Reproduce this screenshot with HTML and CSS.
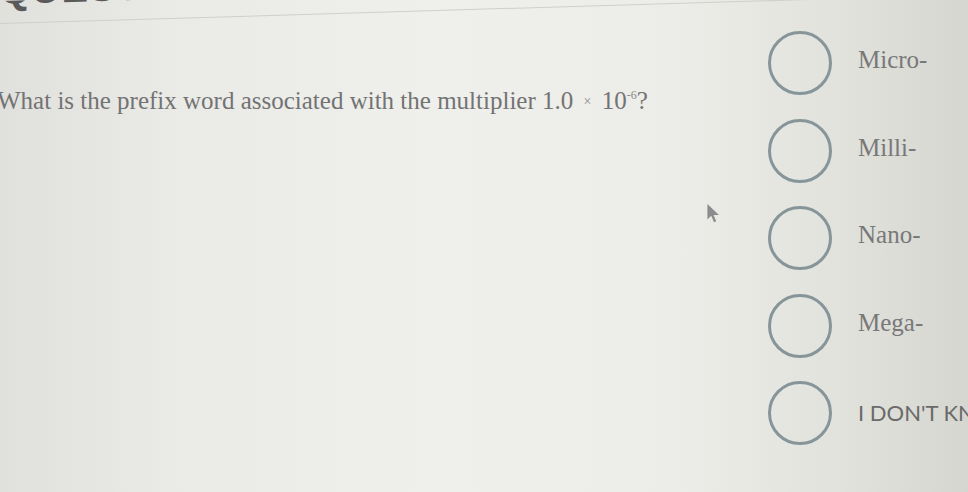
FILE: index.html
```html
<!DOCTYPE html>
<html lang="en">
<head>
<meta charset="utf-8">
<title>Question</title>
<link rel="stylesheet" href="styles.css">
</head>
<body>
<div class="page">
  <header class="qhead">
    <h1 class="qtitle">QUESTION 7</h1>
  </header>
  <main class="content">
    <p class="question">What is the prefix word associated with the multiplier 1.0 <span class="times">×</span> 10<sup>-6</sup>?</p>
    <ul class="options">
      <li class="option"><span class="radio"></span><span class="label">Micro-</span></li>
      <li class="option"><span class="radio"></span><span class="label">Milli-</span></li>
      <li class="option"><span class="radio"></span><span class="label">Nano-</span></li>
      <li class="option"><span class="radio"></span><span class="label">Mega-</span></li>
      <li class="option"><span class="radio"></span><span class="label label-sans">I DON'T KNOW</span></li>
    </ul>
  </main>
  <svg class="cursor" width="16" height="22" viewBox="0 0 14 20"><path d="M1 1 L1 15 L4.5 11.5 L7 17.5 L9 16.6 L6.6 11 L11.5 11 Z" fill="#8c8c8c"/></svg>
</div>
</body>
</html>
```
FILE: styles.css
```css
html, body {
  margin: 0;
  padding: 0;
}
body {
  width: 968px;
  height: 492px;
  overflow: hidden;
  background: linear-gradient(90deg, #e0e0dc 0%, #eaeae7 18%, #efefec 45%, #ecece8 70%, #e1e1dc 88%, #d6d6d0 100%);
  font-family: "Liberation Serif", serif;
}
.page {
  position: relative;
  width: 968px;
  height: 492px;
  overflow: hidden;
}
.qhead {
  width: 1000px;
  height: 22px;
  border-bottom: 1px solid #cfcfcb;
  transform: rotate(-1.7deg);
  transform-origin: 0 100%;
  margin-top: 1px;
  overflow: hidden;
}
.qtitle {
  margin: 0;
  margin-top: -30px;
  font-family: "Liberation Sans", sans-serif;
  font-weight: 700;
  font-size: 40px;
  line-height: 38px;
  color: #5a5a5a;
  letter-spacing: 1px;
}
.content {
  display: flex;
  align-items: flex-start;
}
.question {
  flex: none;
  width: 771px;
  margin: 62px 0 0 -3px;
  font-size: 25px;
  line-height: 30px;
  color: #737373;
}
.times {
  font-size: 14px;
  color: #888;
  vertical-align: 3px;
  margin: 0 4px;
}
.question sup {
  font-size: 12px;
  color: #888;
  vertical-align: 10px;
  line-height: 0;
}
.options {
  list-style: none;
  margin: 7px 0 0 0;
  padding: 0;
  display: flex;
  flex-direction: column;
  gap: 23.5px;
}
.option {
  display: flex;
  align-items: center;
  gap: 26px;
  white-space: nowrap;
}
.radio {
  width: 58px;
  height: 58px;
  border: 3px solid #85959a;
  border-radius: 50%;
  flex: none;
}
.label {
  font-size: 25px;
  color: #787878;
  margin-top: -6px;
}
.label-sans {
  font-family: "Lato", "Liberation Sans", sans-serif;
  font-size: 22px;
  margin-top: -2px;
  color: #6a6a6a;
}
.cursor {
  position: absolute;
  left: 706px;
  top: 203px;
}
```
